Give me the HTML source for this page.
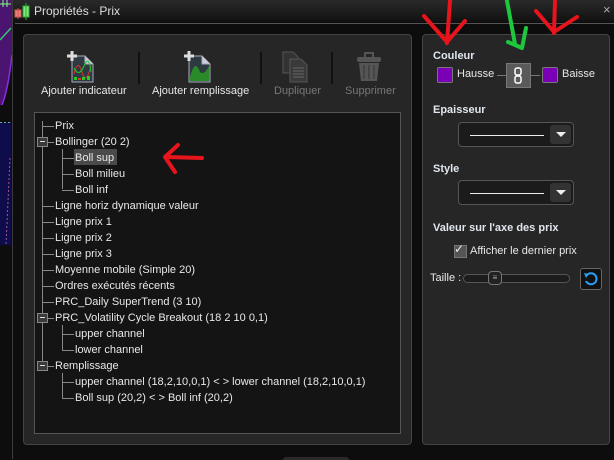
<!DOCTYPE html>
<html><head><meta charset="utf-8"><style>
*{margin:0;padding:0;box-sizing:border-box}
body{width:614px;height:459px;background:#0d0d0d;font-family:"Liberation Sans",Arial,sans-serif;font-size:11px;color:#e6e6e6;position:relative;overflow:hidden}
.abs{position:absolute}
.panel{position:absolute;background:#262626;border:1px solid #444;border-radius:4px}
.t{position:absolute;white-space:nowrap;font-size:11px;color:#e8e8e8}
.lbl{position:absolute;white-space:nowrap;font-weight:bold;font-size:11px;color:#e0e6ee}
.vl{position:absolute;background:#888;width:1px}
.hz{position:absolute;background:#888;height:1px}
.minus{position:absolute;width:11px;height:10px;border:1px solid #888;background:#3a3a3a}
.minus:after{content:"";position:absolute;left:2px;top:3px;width:5px;height:1px;background:#ddd}
.dd{position:absolute;width:116px;height:25px;background:#1b1b1b;border:1px solid #555;border-radius:4px}
.dd .ln{position:absolute;left:11px;top:12px;width:74px;height:1px;background:#eee}
.dd .bt{position:absolute;right:2px;top:2px;width:21px;height:19px;background:#333;border-radius:3px}
.dd .bt:after{content:"";position:absolute;left:6px;top:7px;border-left:5px solid transparent;border-right:5px solid transparent;border-top:5px solid #eee}
</style></head><body>
<svg class="abs" style="left:0;top:0" width="13" height="459">
<path d="M0 0 H12 V60 Q8 95 2 105 H0Z" fill="#4a1470"/>
<path d="M12 55 Q8 90 2 105" stroke="#8a2be2" stroke-width="1.5" fill="none"/>
<path d="M0 40 L11 28" stroke="#2ecc71" stroke-width="1.5"/>
<path d="M0 4 H11 M3 0 V7 M7 0 V7" stroke="#7fff7f" stroke-width="1"/>
<rect x="0" y="122" width="11" height="123" fill="#0e0c4a"/>
<path d="M0 122.5 H11" stroke="#6a9" stroke-dasharray="2,2"/>
<path d="M10 158 L6 245" stroke="#a58" stroke-dasharray="2,2"/>
</svg>
<div class="abs" style="left:12px;top:0;width:1px;height:459px;background:#3c3c3c"></div>
<div class="abs" style="left:13px;top:0;width:601px;height:22px;background:linear-gradient(#2a2a2a,#111)"></div>
<div class="abs" style="left:15px;top:23px;width:599px;height:1px;background:#555"></div>
<svg class="abs" style="left:14px;top:3px" width="16" height="17"><rect x="1" y="7" width="6" height="7" fill="#f08080" stroke="#c55"/><line x1="4" y1="5" x2="4" y2="16" stroke="#c55"/><rect x="9" y="3" width="6" height="11" fill="#7ee87e" stroke="#3a3"/><line x1="12" y1="0" x2="12" y2="17" stroke="#3a3"/></svg>
<div class="t" style="left:34px;top:4px;font-size:12px;color:#ddd">Propriétés - Prix</div>
<div class="t" style="left:603px;top:2px;font-size:13px;color:#aaa">×</div>

<div class="panel" style="left:23px;top:34px;width:389px;height:411px"></div>
<svg class="abs" style="left:64px;top:50px" width="34" height="34">
<path d="M8 6 H21 L29 14 V32 H8Z" fill="#2d3a42" stroke="#aab" stroke-width="1"/>
<path d="M21 6 V14 H29" fill="#ccd" stroke="#aab"/>
<path d="M10 24 Q14 8 18 22 T27 16" stroke="#d33" fill="none"/>
<path d="M10 18 Q15 28 20 16 T27 22" stroke="#2c2" fill="none"/>
<rect x="10" y="27" width="3" height="3" fill="#2c2"/><rect x="14" y="28" width="3" height="2" fill="#d33"/><rect x="18" y="27" width="3" height="3" fill="#2c2"/><rect x="23" y="26" width="3" height="4" fill="#2c2"/>
<path d="M3 6 H13 M8 1 V11" stroke="#ddd" stroke-width="3"/>
</svg>
<div class="t" style="left:41px;top:85px">Ajouter indicateur</div>
<div class="abs" style="left:138px;top:52px;width:2px;height:32px;background:#111"></div>
<svg class="abs" style="left:181px;top:50px" width="34" height="34">
<path d="M8 6 H21 L29 14 V32 H8Z" fill="#2d3a42" stroke="#aab"/>
<path d="M21 6 V14 H29" fill="#ccd" stroke="#aab"/>
<path d="M9 31 L9 27 Q14 8 19 22 Q23 26 28 16 V31Z" fill="#2a8a2a"/>
<path d="M3 6 H13 M8 1 V11" stroke="#ddd" stroke-width="3"/>
</svg>
<div class="t" style="left:152px;top:85px">Ajouter remplissage</div>
<div class="abs" style="left:260px;top:52px;width:2px;height:32px;background:#111"></div>
<svg class="abs" style="left:280px;top:51px" width="34" height="32">
<path d="M3 1 H13 L18 6 V22 H3Z" fill="#333" stroke="#555"/>
<path d="M10 8 H21 L27 14 V31 H10Z" fill="#3a3a3a" stroke="#555"/>
<path d="M13 17 H24 M13 20 H24 M13 23 H24 M13 26 H24" stroke="#666"/>
</svg>
<div class="t" style="left:274px;top:85px;color:#777">Dupliquer</div>
<div class="abs" style="left:331px;top:52px;width:2px;height:32px;background:#111"></div>
<svg class="abs" style="left:355px;top:52px" width="28" height="30">
<rect x="2" y="5" width="24" height="5" rx="2" fill="#555"/><rect x="10" y="1" width="8" height="5" fill="none" stroke="#555" stroke-width="2"/>
<path d="M4 11 H24 L22 29 H6Z" fill="#555"/><path d="M9 13 V27 M14 13 V27 M19 13 V27" stroke="#444" stroke-width="2"/>
</svg>
<div class="t" style="left:345px;top:85px;color:#777">Supprimer</div>

<div class="abs" style="left:34px;top:112px;width:367px;height:322px;background:#141414;border:1px solid #555"></div>
<div class="vl" style="left:42px;top:121px;height:246px"></div>
<div class="vl" style="left:62px;top:149px;height:40px"></div>
<div class="vl" style="left:62px;top:325px;height:26px"></div>
<div class="vl" style="left:62px;top:373px;height:26px"></div>
<div class="minus" style="left:37px;top:137px"></div>
<div class="minus" style="left:37px;top:313px"></div>
<div class="minus" style="left:37px;top:361px"></div>
<div class="abs" style="left:74px;top:149px;width:43px;height:16px;background:#4a4a4a"></div>
<div id="tree"></div>
<script>
var items=[["Prix",0],["Bollinger (20 2)",0,1],["Boll sup",1],["Boll milieu",1],["Boll inf",1],["Ligne horiz dynamique valeur",0],["Ligne prix 1",0],["Ligne prix 2",0],["Ligne prix 3",0],["Moyenne mobile (Simple 20)",0],["Ordres exécutés récents",0],["PRC_Daily SuperTrend (3 10)",0],["PRC_Volatility Cycle Breakout (18 2 10 0,1)",0,1],["upper channel",1],["lower channel",1],["Remplissage",0,1],["upper channel (18,2,10,0,1) < > lower channel (18,2,10,0,1)",1],["Boll sup (20,2) < > Boll inf (20,2)",1]];
var h="";items.forEach(function(it,i){var y=125+i*16;var lx=it[1]?62:(it[2]?48:42);var tx=it[1]?75:55;
h+='<div class="hz" style="left:'+lx+'px;top:'+(y+1)+'px;width:'+(tx-lx-1)+'px"></div>';
h+='<div class="t" style="left:'+tx+'px;top:'+(y-5)+'px">'+it[0].replace(/</g,"&lt;").replace(/>/g,"&gt;")+'</div>';});
document.getElementById("tree").innerHTML=h;
</script>

<div class="panel" style="left:422px;top:34px;width:188px;height:411px"></div>
<div class="lbl" style="left:433px;top:50px">Couleur</div>
<div class="abs" style="left:437px;top:67px;width:16px;height:16px;background:#7a00b8;border:1px solid #777;border-radius:2px"></div>
<div class="t" style="left:457px;top:68px">Hausse</div>
<div class="abs" style="left:497px;top:75px;width:9px;height:1px;background:#777"></div>
<div class="abs" style="left:506px;top:63px;width:25px;height:25px;background:#5a5a5a;border:1px solid #777"></div>
<svg class="abs" style="left:512px;top:67px" width="14" height="18"><rect x="3" y="1" width="6" height="7" rx="2" fill="none" stroke="#fff" stroke-width="1.5"/><rect x="3" y="9" width="6" height="7" rx="2" fill="none" stroke="#fff" stroke-width="1.5"/></svg>
<div class="abs" style="left:531px;top:75px;width:9px;height:1px;background:#777"></div>
<div class="abs" style="left:542px;top:67px;width:16px;height:16px;background:#7a00b8;border:1px solid #777;border-radius:2px"></div>
<div class="t" style="left:562px;top:68px">Baisse</div>
<div class="lbl" style="left:433px;top:104px">Epaisseur</div>
<div class="dd" style="left:458px;top:122px"><div class="ln"></div><div class="bt"></div></div>
<div class="lbl" style="left:433px;top:163px">Style</div>
<div class="dd" style="left:458px;top:180px"><div class="ln"></div><div class="bt"></div></div>
<div class="lbl" style="left:433px;top:222px">Valeur sur l'axe des prix</div>
<div class="abs" style="left:454px;top:245px;width:13px;height:13px;background:#555;border:1px solid #777"></div>
<div class="t" style="left:454px;top:242px;color:#eee;font-size:12px">✓</div>
<div class="t" style="left:470px;top:245px">Afficher le dernier prix</div>
<div class="t" style="left:430px;top:272px">Taille :</div>
<div class="abs" style="left:463px;top:274px;width:107px;height:9px;background:#1c1c1c;border:1px solid #555;border-radius:5px"></div>
<div class="abs" style="left:488px;top:271px;width:14px;height:14px;background:#222;border:1px solid #777;border-radius:4px;font-size:8px;color:#aaa;text-align:center;line-height:12px">≡</div>
<div class="abs" style="left:580px;top:268px;width:22px;height:22px;background:#111;border:1px solid #666;border-radius:3px"></div>
<svg class="abs" style="left:583px;top:271px" width="16" height="16"><path d="M4 4 A5.5 5.5 0 1 1 3 10" stroke="#2a9df4" stroke-width="2" fill="none"/><path d="M1 2 L6 3 L3 7Z" fill="#2a9df4"/></svg>

<div class="abs" style="left:283px;top:457px;width:66px;height:3px;background:#2a2a2a;border-radius:3px 3px 0 0"></div>

<svg class="abs" style="left:0;top:0" width="614" height="459">
<g stroke="#e8141c" stroke-width="4" fill="none" stroke-linecap="round" stroke-linejoin="round">
<path d="M450 1 L447 43 M424 16 L447 42 L465 21"/>
<path d="M555 1 L554 33 M536 11 L554 32 L577 17"/>
<path d="M202 158 L166 157 M178 145 L165 157 L175 172"/>
</g>
<g stroke="#1ec83c" stroke-width="4" fill="none" stroke-linecap="round" stroke-linejoin="round">
<path d="M507 1 L515 44 M508 42 L522 48 L526 28"/>
</g>
</svg>
</body></html>
